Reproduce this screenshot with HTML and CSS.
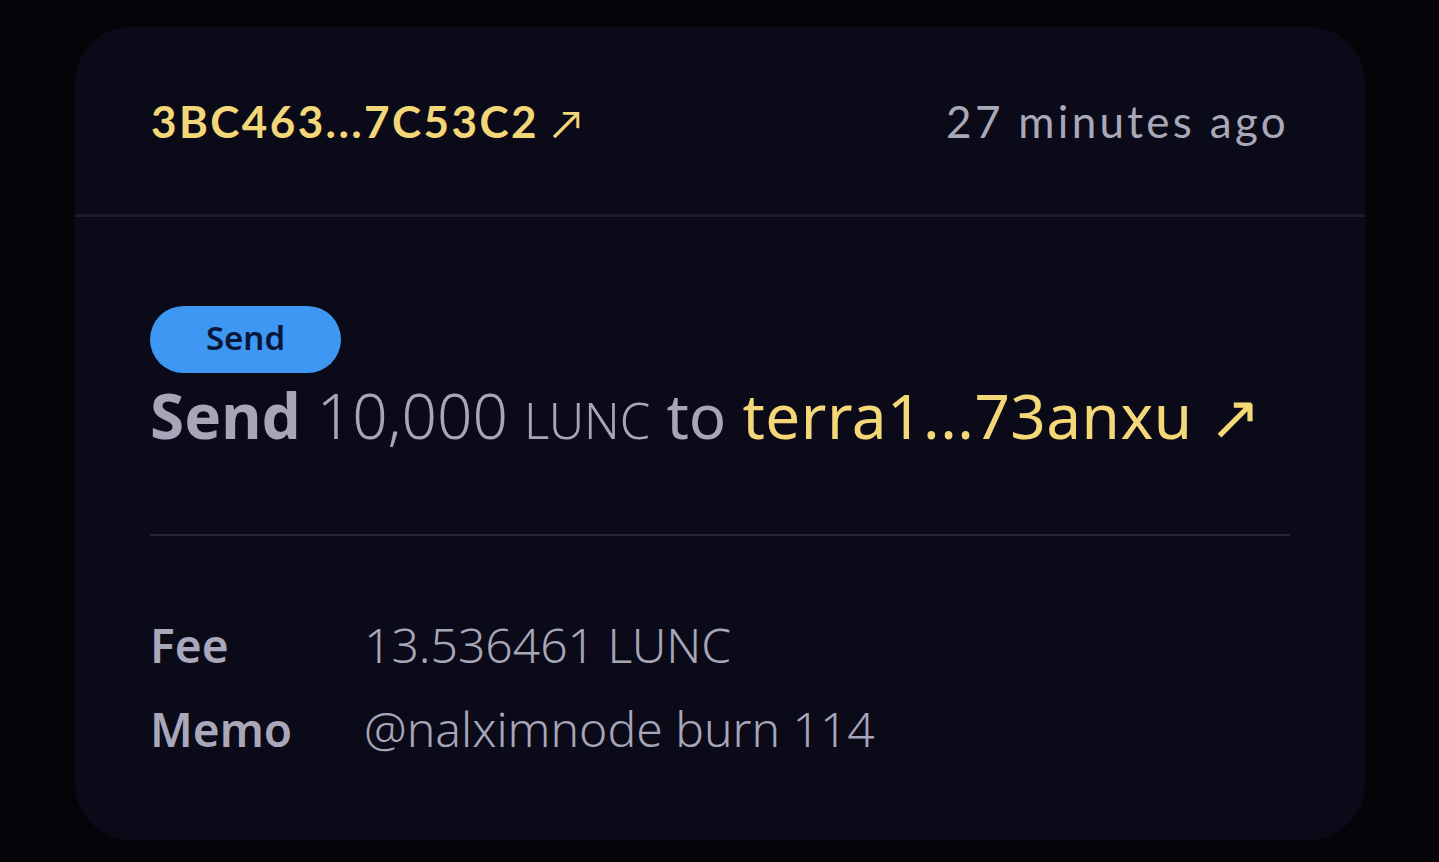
FILE: index.html
```html
<!DOCTYPE html>
<html lang="en">
<head>
<meta charset="utf-8">
<title>Transaction</title>
<link rel="stylesheet" href="styles.css">
</head>
<body>
<main class="page">
  <section class="card">
    <header class="card-head">
      <a class="hash" href="#">3BC463...7C53C2 <span class="arrow">↗</span></a>
      <span class="time">27 minutes ago</span>
    </header>
    <div class="card-body">
      <span class="badge">Send</span>
      <p class="msg"><strong class="verb">Send</strong> <span class="amount">10,000</span> <span class="denom">LUNC</span> <span class="to">to</span> <a class="addr" href="#">terra1...73anxu <span class="arrow">↗</span></a></p>
      <hr class="rule">
      <dl class="details">
        <div class="row"><dt>Fee</dt><dd>13.536461 LUNC</dd></div>
        <div class="row"><dt>Memo</dt><dd>@nalximnode burn 114</dd></div>
      </dl>
    </div>
  </section>
</main>
</body>
</html>
```

FILE: styles.css
```css
html, body {
  margin: 0;
  padding: 0;
  background: #040409;
}
body {
  font-family: "Noto Sans", "Open Sans", sans-serif;
  color: #a7a6b8;
}
.page {
  padding: 27px 74px 22px 75px;
}
.card {
  background: #0b0a18;
  border-radius: 56px;
  height: 813px;
  overflow: hidden;
}
.card-head {
  height: 190px;
  display: flex;
  align-items: center;
  justify-content: space-between;
  padding: 0 76px;
  box-sizing: border-box;
  border-bottom: 3px solid #1d1c2c;
  font-family: Lato, "Noto Sans", sans-serif;
  font-size: 44px;
}
.hash {
  color: #f3d677;
  font-weight: 700;
  text-decoration: none;
  letter-spacing: 2.4px;
}
.hash .arrow {
  font-weight: 400;
  font-size: 40px;
  letter-spacing: 0;
}
.time {
  color: #a9a8b9;
  font-weight: 400;
  letter-spacing: 3.3px;
}
.card-body {
  padding: 89px 75px 0 75px;
}
.badge {
  display: inline-block;
  background: #3d97f3;
  color: #0a1638;
  font-size: 33px;
  font-weight: 600;
  line-height: 64px;
  height: 67px;
  width: 191px;
  text-align: center;
  border-radius: 34px;
}
.msg {
  margin: 0;
  font-size: 62px;
  line-height: 84px;
  white-space: nowrap;
}
.verb {
  font-weight: 700;
}
.amount {
  font-weight: 300;
}
.denom {
  font-size: 49px;
  font-weight: 300;
}
.to {
  font-weight: 400;
}
.addr {
  color: #f4d878;
  text-decoration: none;
  font-weight: 400;
  letter-spacing: 0.5px;
}
.rule {
  border: 0;
  height: 2px;
  background: #262536;
  margin: 72px 0 0 0;
}
.details {
  margin: 67px 0 0 0;
  font-size: 48px;
  line-height: 84px;
}
.row {
  display: flex;
}
.row dt {
  width: 214px;
  font-size: 46px;
  font-weight: 600;
  color: #a9a8ba;
}
.row dd {
  margin: 0;
  font-weight: 300;
  color: #a7a6b8;
}
```
